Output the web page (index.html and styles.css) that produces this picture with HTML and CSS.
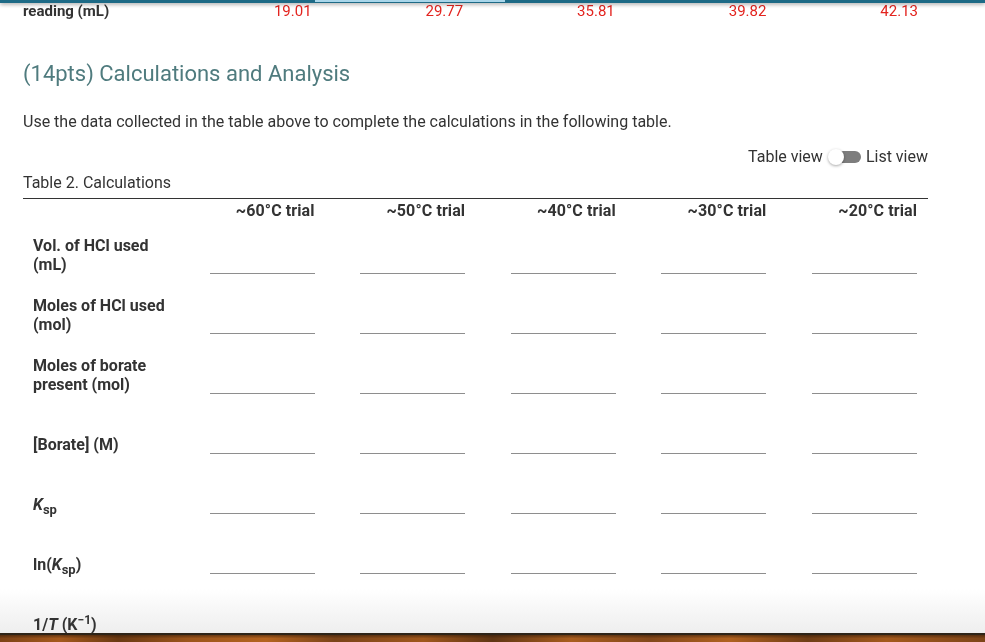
FILE: index.html
```html
<!DOCTYPE html>
<html>
<head>
<meta charset="utf-8">
<link rel="stylesheet" href="styles.css">
</head>
<body>
<div class="topbar"><span class="topbar-seg"></span></div>
<div class="bottom-fade"></div>
<div class="bottom-strip"></div>

<main class="page">
  <div class="reading-row">
    <div class="reading-label">reading (mL)</div>
    <div class="reading-val">19.01</div>
    <div class="reading-val">29.77</div>
    <div class="reading-val">35.81</div>
    <div class="reading-val">39.82</div>
    <div class="reading-val">42.13</div>
  </div>

  <h2 class="section-title">(14pts) Calculations and Analysis</h2>
  <p class="intro">Use the data collected in the table above to complete the calculations in the following table.</p>

  <div class="view-toggle">
    <span>Table view</span>
    <span class="switch"></span>
    <span>List view</span>
  </div>

  <div class="caption">Table 2. Calculations</div>

  <div class="calc-table">
    <div class="head-row">
      <div class="cell-label"></div>
      <div class="head-cell">~60°C trial</div>
      <div class="head-cell">~50°C trial</div>
      <div class="head-cell">~40°C trial</div>
      <div class="head-cell">~30°C trial</div>
      <div class="head-cell">~20°C trial</div>
    </div>

    <div class="data-row">
      <div class="cell-label">Vol. of HCl used<br>(mL)</div>
      <div class="cell"><span class="blank"></span></div>
      <div class="cell"><span class="blank"></span></div>
      <div class="cell"><span class="blank"></span></div>
      <div class="cell"><span class="blank"></span></div>
      <div class="cell"><span class="blank"></span></div>
    </div>
    <div class="data-row">
      <div class="cell-label">Moles of HCl used<br>(mol)</div>
      <div class="cell"><span class="blank"></span></div>
      <div class="cell"><span class="blank"></span></div>
      <div class="cell"><span class="blank"></span></div>
      <div class="cell"><span class="blank"></span></div>
      <div class="cell"><span class="blank"></span></div>
    </div>
    <div class="data-row">
      <div class="cell-label">Moles of borate<br>present (mol)</div>
      <div class="cell"><span class="blank"></span></div>
      <div class="cell"><span class="blank"></span></div>
      <div class="cell"><span class="blank"></span></div>
      <div class="cell"><span class="blank"></span></div>
      <div class="cell"><span class="blank"></span></div>
    </div>
    <div class="data-row">
      <div class="cell-label">[Borate] (M)</div>
      <div class="cell"><span class="blank"></span></div>
      <div class="cell"><span class="blank"></span></div>
      <div class="cell"><span class="blank"></span></div>
      <div class="cell"><span class="blank"></span></div>
      <div class="cell"><span class="blank"></span></div>
    </div>
    <div class="data-row">
      <div class="cell-label"><i>K</i><sub>sp</sub></div>
      <div class="cell"><span class="blank"></span></div>
      <div class="cell"><span class="blank"></span></div>
      <div class="cell"><span class="blank"></span></div>
      <div class="cell"><span class="blank"></span></div>
      <div class="cell"><span class="blank"></span></div>
    </div>
    <div class="data-row">
      <div class="cell-label">ln(<i>K</i><sub>sp</sub>)</div>
      <div class="cell"><span class="blank"></span></div>
      <div class="cell"><span class="blank"></span></div>
      <div class="cell"><span class="blank"></span></div>
      <div class="cell"><span class="blank"></span></div>
      <div class="cell"><span class="blank"></span></div>
    </div>
    <div class="data-row">
      <div class="cell-label">1/<i>T</i> (K<sup>−1</sup>)</div>
      <div class="cell"><span class="blank"></span></div>
      <div class="cell"><span class="blank"></span></div>
      <div class="cell"><span class="blank"></span></div>
      <div class="cell"><span class="blank"></span></div>
      <div class="cell"><span class="blank"></span></div>
    </div>
  </div>
</main>
</body>
</html>
```

FILE: styles.css
```css
html {
  background: #ffffff;
}
body {
  margin: 0;
  font-family: Roboto, "Liberation Sans", Arial, sans-serif;
  color: #333;
  overflow: hidden;
  height: 642px;
}

.topbar {
  position: fixed;
  top: 0;
  left: 0;
  right: 0;
  height: 3px;
  background: #1d6a86;
  box-shadow: 0 1px 4px rgba(0, 0, 0, 0.45);
  z-index: 5;
}
.topbar-seg {
  position: absolute;
  left: 315px;
  width: 190px;
  top: 0;
  height: 2px;
  background: #a9d6ea;
}

.bottom-fade {
  position: fixed;
  left: 0;
  right: 0;
  bottom: 9px;
  height: 44px;
  background: linear-gradient(to bottom, #ffffff, #eeeeee);
  z-index: -1;
}
.bottom-strip {
  position: fixed;
  left: 0;
  right: 0;
  bottom: 0;
  height: 9px;
  border-top: 2px solid #2e2418;
  box-sizing: border-box;
  background:
    linear-gradient(to bottom, rgba(40, 20, 5, 0.5), rgba(0, 0, 0, 0) 50%),
    linear-gradient(90deg, #7c4216 0%, #a5591c 6%, #6a3912 12%, #9b541b 19%, #b4631f 27%, #7a4318 34%, #a0571c 43%, #5f3513 50%, #a95d1e 58%, #82471a 66%, #b0611f 74%, #6f3d15 82%, #a4591c 90%, #7d4418 100%);
  z-index: 6;
}

.page {
  padding: 0 57px 0 23px;
}

.reading-row {
  display: grid;
  grid-template-columns: 147px repeat(5, 1fr);
  margin-top: 2px;
  line-height: 18px;
  font-size: 15px;
}
.reading-label {
  font-weight: 700;
  color: #333;
}
.reading-val {
  text-align: right;
  padding-right: 10px;
  color: #e3241f;
}

.section-title {
  margin: 39px 0 0;
  font-size: 22px;
  line-height: 30px;
  font-weight: 400;
  color: #4f7b7e;
}

.intro {
  margin: 23px 0 0;
  font-size: 16px;
  line-height: 20px;
  color: #333;
}

.view-toggle {
  margin-top: 15px;
  display: flex;
  justify-content: flex-end;
  align-items: center;
  gap: 5px;
  font-size: 16px;
  line-height: 20px;
  color: #333;
}
.switch {
  position: relative;
  width: 33px;
  height: 16px;
}
.switch::before {
  content: "";
  position: absolute;
  left: 6px;
  top: 2px;
  width: 27px;
  height: 12px;
  border-radius: 6px;
  background: #7d7d7d;
}
.switch::after {
  content: "";
  position: absolute;
  left: 0;
  top: 0;
  width: 16px;
  height: 16px;
  border-radius: 50%;
  background: #fff;
  box-shadow: 0 1px 3px rgba(0, 0, 0, 0.35);
}

.caption {
  margin-top: 6px;
  padding-bottom: 5px;
  font-size: 16px;
  line-height: 20px;
  color: #333;
  border-bottom: 1px solid #333;
}

.calc-table {
  font-size: 16px;
}
.head-row,
.data-row {
  display: grid;
  grid-template-columns: 152px repeat(5, 1fr);
}
.head-row {
  padding-top: 3px;
  line-height: 18px;
  height: 19px;
  box-sizing: border-box;
}
.head-cell {
  text-align: right;
  padding-right: 11px;
  font-weight: 700;
  color: #333;
  letter-spacing: 0.1px;
}
.data-row {
  height: 60px;
  align-items: end;
  padding-bottom: 4px;
  box-sizing: border-box;
}
.cell-label {
  padding-left: 10px;
  font-weight: 700;
  line-height: 19px;
  color: #333;
}
.cell-label sub {
  line-height: 0;
  font-size: 13px;
  vertical-align: -4px;
}
.cell-label sup {
  line-height: 0;
  font-size: 12px;
  vertical-align: 6px;
}
.cell {
  display: flex;
  justify-content: flex-end;
  padding-right: 11px;
}
.blank {
  display: block;
  width: 105px;
  height: 20px;
  border-bottom: 1px solid #8e8e8e;
}
```
